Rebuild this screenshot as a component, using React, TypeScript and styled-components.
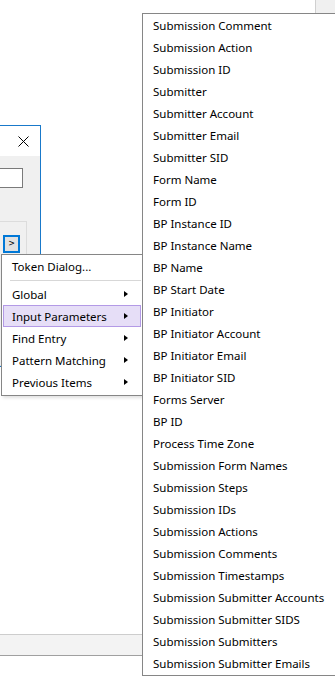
import React from "react";
import styled, { createGlobalStyle } from "styled-components";

const mainItems: { label: string; sub: boolean; active?: boolean }[] = [
  { label: "Global", sub: true },
  { label: "Input Parameters", sub: true, active: true },
  { label: "Find Entry", sub: true },
  { label: "Pattern Matching", sub: true },
  { label: "Previous Items", sub: true },
];

const inputParams = [
  "Submission Comment",
  "Submission Action",
  "Submission ID",
  "Submitter",
  "Submitter Account",
  "Submitter Email",
  "Submitter SID",
  "Form Name",
  "Form ID",
  "BP Instance ID",
  "BP Instance Name",
  "BP Name",
  "BP Start Date",
  "BP Initiator",
  "BP Initiator Account",
  "BP Initiator Email",
  "BP Initiator SID",
  "Forms Server",
  "BP ID",
  "Process Time Zone",
  "Submission Form Names",
  "Submission Steps",
  "Submission IDs",
  "Submission Actions",
  "Submission Comments",
  "Submission Timestamps",
  "Submission Submitter Accounts",
  "Submission Submitter SIDS",
  "Submission Submitters",
  "Submission Submitter Emails",
];

const App: React.FC = () => {
  return (
    <Desktop>
      <GlobalStyle />
      <BackWindow>
        <TopStrip>
          <SidePanel />
        </TopStrip>
        <Filler />
        <StatusBand />
        <BottomGap />
      </BackWindow>

      <Dialog>
        <TitleBar>
          <CloseIcon width="12" height="12" viewBox="0 0 12 12">
            <path d="M0.5 0.5 L10.5 10.5 M10.5 0.5 L0.5 10.5" stroke="#000" strokeWidth="1" fill="none" />
          </CloseIcon>
        </TitleBar>
        <DialogBody>
          <TextBox />
          <GroupBox>
            <TokenButton>&gt;</TokenButton>
          </GroupBox>
        </DialogBody>
      </Dialog>

      <MainMenu>
        <MenuItem>
          <span>Token Dialog...</span>
        </MenuItem>
        <Separator />
        {mainItems.map((item) => (
          <MenuItem key={item.label} $active={item.active}>
            <span>{item.label}</span>
            {item.sub && <Arrow />}
          </MenuItem>
        ))}
      </MainMenu>

      <SubMenu>
        {inputParams.map((p) => (
          <SubItem key={p}>{p}</SubItem>
        ))}
      </SubMenu>
    </Desktop>
  );
};

const GlobalStyle = createGlobalStyle`
  html, body {
    margin: 0;
    padding: 0;
    background: #fff;
    overflow: hidden;
  }
  body {
    font-family: "Noto Sans", "Open Sans", sans-serif;
    font-size: 11.5px;
    color: #000;
  }
`;

const Desktop = styled.div`
  position: relative;
  width: 335px;
  height: 678px;
  overflow: hidden;
  background: #fff;
`;

const BackWindow = styled.div`
  display: flex;
  flex-direction: column;
  height: 100%;
`;

const TopStrip = styled.div`
  height: 13px;
  display: flex;
  justify-content: flex-end;
`;

const SidePanel = styled.div`
  width: 19px;
  background: #f0f0f0;
  border-left: 1px solid #d0d0d0;
`;

const Filler = styled.div`
  flex: 1;
`;

const StatusBand = styled.div`
  height: 20px;
  background: #f3f3f3;
  border-top: 1px solid #cdcdcd;
  border-bottom: 1px solid #a0a0a0;
`;

const BottomGap = styled.div`
  height: 22px;
`;

const Dialog = styled.div`
  position: absolute;
  left: -60px;
  top: 125px;
  width: 99px;
  height: 240px;
  border: 1px solid #1979ca;
  background: #fff;
  display: flex;
  flex-direction: column;
`;

const TitleBar = styled.div`
  height: 30px;
  background: #fff;
  display: flex;
  justify-content: flex-end;
  align-items: flex-start;
  padding: 10px 10px 0 0;
  box-sizing: border-box;
`;

const CloseIcon = styled.svg`
  display: block;
`;

const DialogBody = styled.div`
  flex: 1;
  background: #f0f0f0;
  padding-top: 12px;
  display: flex;
  flex-direction: column;
`;

const TextBox = styled.div`
  width: 80px;
  height: 18px;
  background: #fff;
  border: 1px solid #7a7a7a;
`;

const GroupBox = styled.div`
  margin-top: 33px;
  width: 86px;
  flex: 1;
  border: 1px solid #dcdcdc;
  border-left: none;
  display: flex;
  justify-content: flex-end;
  align-items: flex-start;
  padding: 13px 6px 0 0;
  box-sizing: border-box;
`;

const TokenButton = styled.div`
  width: 13px;
  height: 14px;
  border: 2px solid #0078d7;
  background: #e1e1e1;
  font-family: "DejaVu Sans", sans-serif;
  font-size: 8px;
  line-height: 14px;
  text-align: center;
  color: #000;
`;

const MainMenu = styled.div`
  position: absolute;
  left: 1px;
  top: 254px;
  width: 138px;
  background: #fff;
  border: 1px solid #868686;
  padding: 0 1px 2px;
  box-shadow: 2px 2px 3px rgba(0, 0, 0, 0.12);
`;

const MenuItem = styled.div<{ $active?: boolean }>`
  height: 22px;
  box-sizing: border-box;
  display: flex;
  align-items: center;
  justify-content: space-between;
  padding: 0 12px 0 8px;
  border: 1px solid ${(p) => (p.$active ? "#b39ae6" : "transparent")};
  background: ${(p) => (p.$active ? "#e6def7" : "transparent")};
  white-space: nowrap;
`;

const Arrow = styled.span`
  width: 0;
  height: 0;
  border-top: 3.5px solid transparent;
  border-bottom: 3.5px solid transparent;
  border-left: 4px solid #000;
`;

const Separator = styled.div`
  height: 1px;
  margin: 3px 0 2px 7px;
  background: #d7d7d7;
`;

const SubMenu = styled.div`
  position: absolute;
  left: 142px;
  top: 13px;
  width: 200px;
  background: #fff;
  border: 1px solid #868686;
  padding: 1px 0 0;
`;

const SubItem = styled.div`
  height: 22px;
  line-height: 22px;
  padding-left: 10px;
  white-space: nowrap;
`;

export default App;
